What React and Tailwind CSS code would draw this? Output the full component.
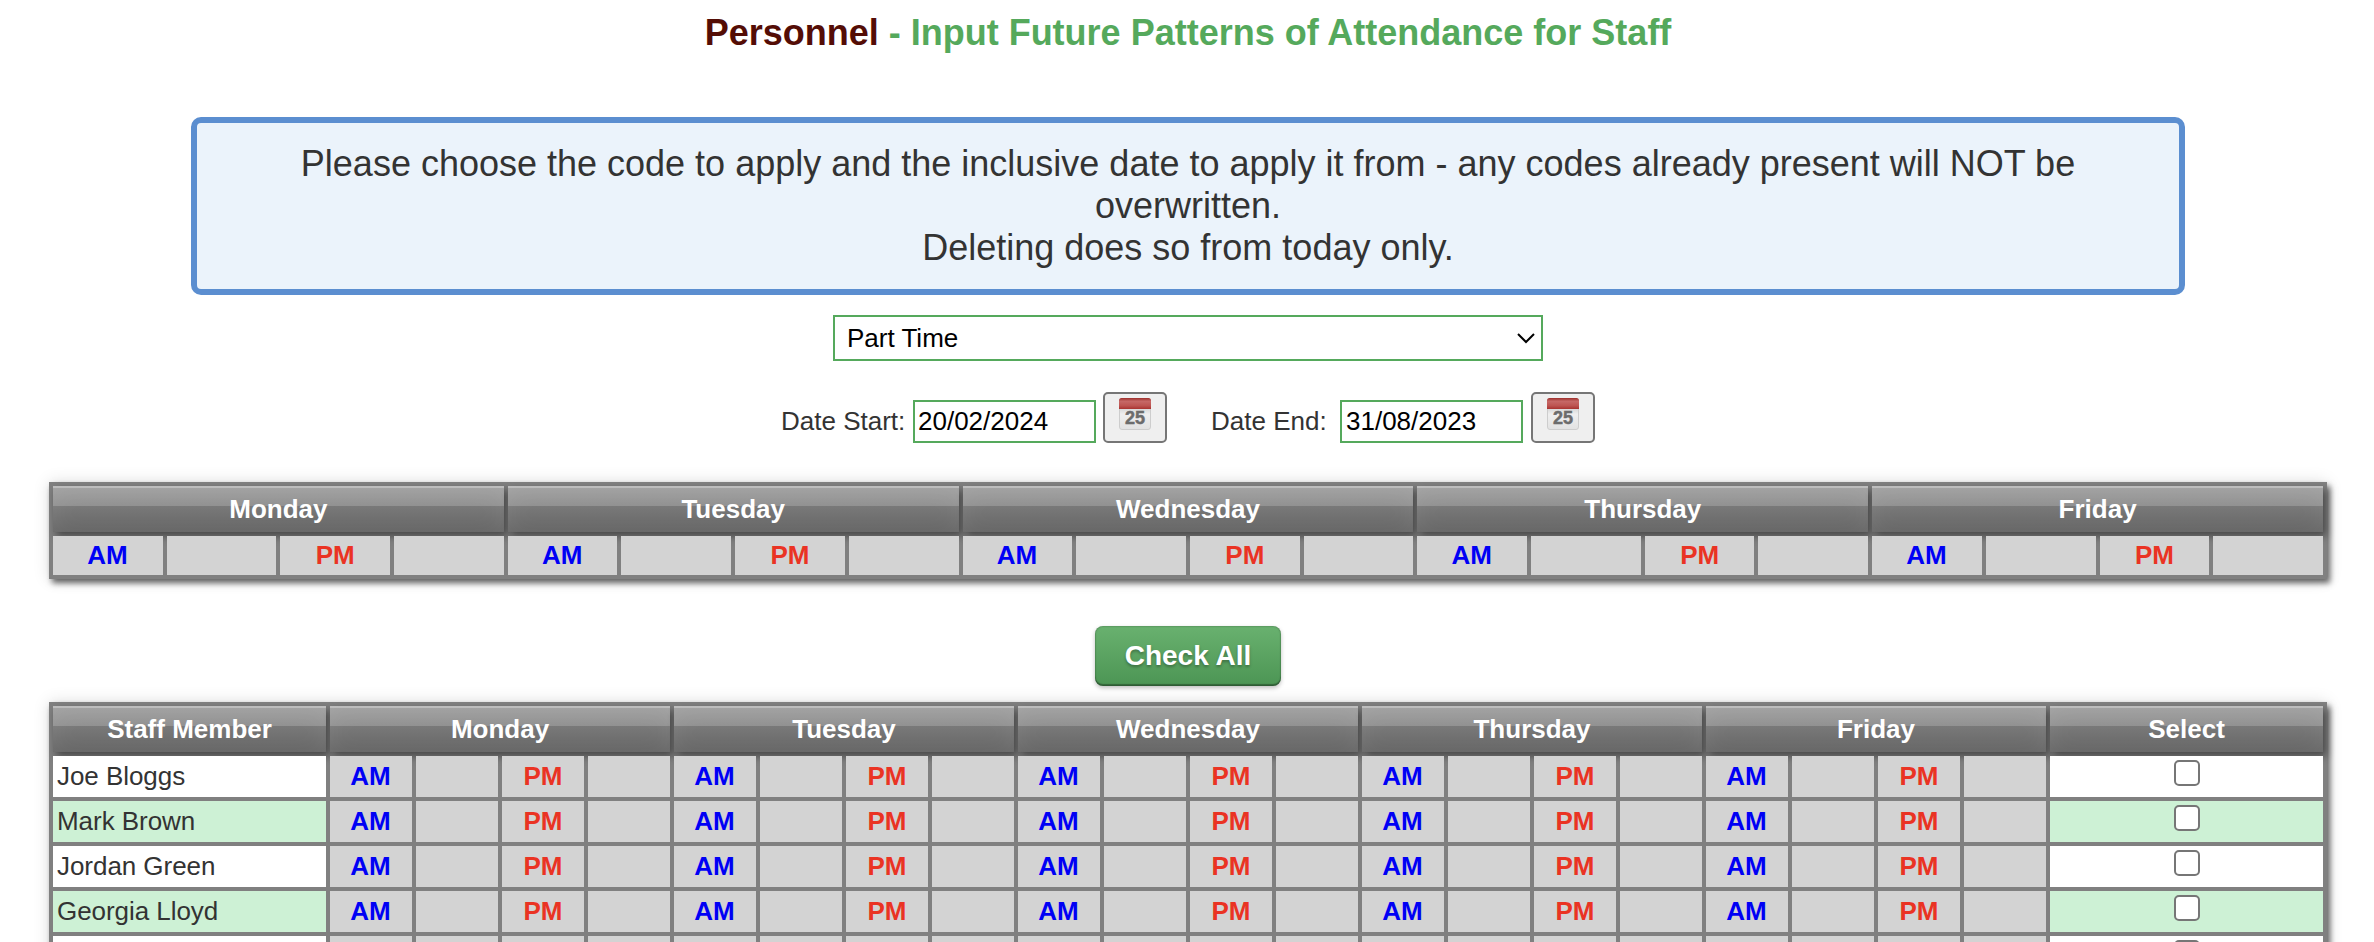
import clsx from "clsx";

const days = ["Monday", "Tuesday", "Wednesday", "Thursday", "Friday"];
const staff = ["Joe Bloggs", "Mark Brown", "Jordan Green", "Georgia Lloyd"];

const Th = ({ children, className }) => (
  <div className={clsx("relative h-[46px] text-center text-[26px] leading-[46px] font-bold text-white bg-[linear-gradient(180deg,#a0a0a0_0%,#929292_43%,#797979_44%,#656565_100%)] shadow-[inset_0_2px_0_rgba(255,255,255,0.28),inset_0_4px_24px_rgba(255,255,255,0.08),3px_4px_8px_rgba(0,0,0,0.45)]", className)}>
    {children}
  </div>
);

const Codes = ({ height, blank }) => (
  <>
    {days.map((day) => (
      <div key={day} className={clsx("relative z-10 col-span-4 grid grid-cols-subgrid text-center text-[26px] font-bold", height)}>
        <div className="bg-[#d3d3d3] pr-px text-[#0000f5]">{!blank && "AM"}</div>
        <div className="bg-[#d3d3d3]" />
        <div className="bg-[#d3d3d3] text-[#ea3323]">{!blank && "PM"}</div>
        <div className="bg-[#d3d3d3]" />
      </div>
    ))}
  </>
);

const StaffRow = ({ name, striped }) => (
  <div className="relative z-10 col-span-full grid h-[41px] grid-cols-subgrid">
    <div className={clsx("pl-1 text-[26px] leading-[41px] tracking-[-0.05px]", striped ? "bg-[#cdf1d5]" : "bg-white")}>{name}</div>
    <Codes height="h-[41px] leading-[41px]" blank={!name} />
    <div className={clsx("flex justify-center pt-1", striped ? "bg-[#cdf1d5]" : "bg-white")}>
      <input type="checkbox" className="h-[26px] w-[26px] appearance-none rounded-[5px] border-2 border-[#767676] bg-white" />
    </div>
  </div>
);

const CalendarIcon = () => (
  <svg width="32" height="32" viewBox="0 0 32 32">
    <defs>
      <linearGradient id="calTop" x1="0" y1="0" x2="0" y2="1">
        <stop offset="0" stopColor="#9c2f2c" />
        <stop offset="0.3" stopColor="#c66866" />
        <stop offset="0.7" stopColor="#bd5451" />
        <stop offset="1" stopColor="#a83330" />
      </linearGradient>
      <linearGradient id="calPage" x1="0" y1="0" x2="0" y2="1">
        <stop offset="0.3" stopColor="#d6d6d6" />
        <stop offset="0.5" stopColor="#efefef" />
        <stop offset="1" stopColor="#e2e2e2" />
      </linearGradient>
    </defs>
    <rect x="0.5" y="1" width="31" height="30.5" rx="2.5" fill="url(#calPage)" stroke="#cdcdcd" />
    <path d="M0 11V2.500a2.500 2.500 0 0 1 2.500-2.500h27a2.500 2.500 0 0 1 2.500 2.500v8.500z" fill="url(#calTop)" />
    <text x="16" y="26" textAnchor="middle" fontSize="18" fontWeight="bold" fill="#6c6c6c" stroke="#6c6c6c" strokeWidth="0.5" fontFamily="Liberation Sans, sans-serif">25</text>
  </svg>
);

const DateInput = ({ value, inputClass, buttonClass }) => (
  <div className="flex items-end">
    <input readOnly value={value} className={clsx("h-[43px] w-[183px] border-2 border-[#55a95c] bg-white text-[26px] text-black outline-none", inputClass)} />
    <button className={clsx("flex h-[51px] w-16 justify-center rounded-[5px] border-2 border-[#767676] bg-[#efefef] pt-1", buttonClass)}>
      <CalendarIcon />
    </button>
  </div>
);

export default function App() {
  return (
    <div className="h-[942px] w-[2374px] overflow-hidden bg-white font-['Liberation_Sans',Arial,sans-serif] text-[#333]">
      <h1 className="h-[117px] pt-[12px] pl-[2px] text-center text-[36px] leading-[42px] font-bold text-[#55a95c]">
        <span className="text-[#540d06]">Personnel</span> - Input Future Patterns of Attendance for Staff
      </h1>

      <div className="ml-[191px] h-[178px] w-[1994px] rounded-[10px] border-6 border-[#5b8ed0] bg-[#ebf3fb] px-20 pt-[20px] text-center text-[36px] leading-[42px]">
        Please choose the code to apply and the inclusive date to apply it from - any codes already present will NOT be
        <br />
        overwritten.
        <br />
        Deleting does so from today only.
      </div>

      <div className="mt-5 ml-[833px] flex h-[46px] w-[710px] items-center justify-between border-2 border-[#55a95c] pr-[5px] pl-3 text-[26px] text-black">
        <span>Part Time</span>
        <svg width="20" height="12" viewBox="0 0 20 12" fill="none" stroke="#000" strokeWidth="2">
          <path d="M2 2l8 8 8-8" />
        </svg>
      </div>

      <div className="mt-[31px] ml-[781px] flex h-[51px] items-end text-[26px]">
        <span className="w-[132px] leading-[43px] whitespace-nowrap">Date Start:</span>
        <DateInput value="20/02/2024" inputClass="px-[3px]" buttonClass="ml-[7px]" />
        <span className="ml-[44px] w-[129px] leading-[43px] whitespace-nowrap">Date End:</span>
        <DateInput value="31/08/2023" inputClass="px-1" buttonClass="ml-2" />
      </div>

      <div className="mt-[39px] ml-[49px] grid w-[2278px] grid-cols-[repeat(20,minmax(0,1fr))] gap-1 bg-[#808080] p-1 shadow-[3px_4px_6px_rgba(0,0,0,0.6),0_0_16px_rgba(0,0,0,0.12)]">
        {days.map((day) => (
          <Th key={day} className="col-span-4">{day}</Th>
        ))}
        <Codes height="h-[39px] leading-[39px]" />
      </div>

      <button className="mt-[47px] ml-[1095px] block h-[60px] w-[186px] rounded-lg bg-linear-to-b from-[#69b16f] to-[#4c9554] text-[28px] font-bold text-white shadow-[inset_0_-2px_1px_rgba(0,0,0,0.3),inset_0_0_2px_rgba(0,0,0,0.4),0_2px_4px_rgba(0,0,0,0.25)] [text-shadow:0_2px_3px_rgba(0,0,0,0.3)]">
        Check All
      </button>

      <div className="mt-4 ml-[49px] grid w-[2278px] grid-cols-[273px_repeat(20,82px)_273px] gap-1 bg-[#808080] p-1 shadow-[3px_4px_6px_rgba(0,0,0,0.6),0_0_16px_rgba(0,0,0,0.12)]">
        <Th>Staff Member</Th>
        {days.map((day) => (
          <Th key={day} className="col-span-4">{day}</Th>
        ))}
        <Th>Select</Th>
        {staff.map((name, i) => (
          <StaffRow key={name} name={name} striped={i % 2 === 1} />
        ))}
        <StaffRow />
      </div>
    </div>
  );
}
